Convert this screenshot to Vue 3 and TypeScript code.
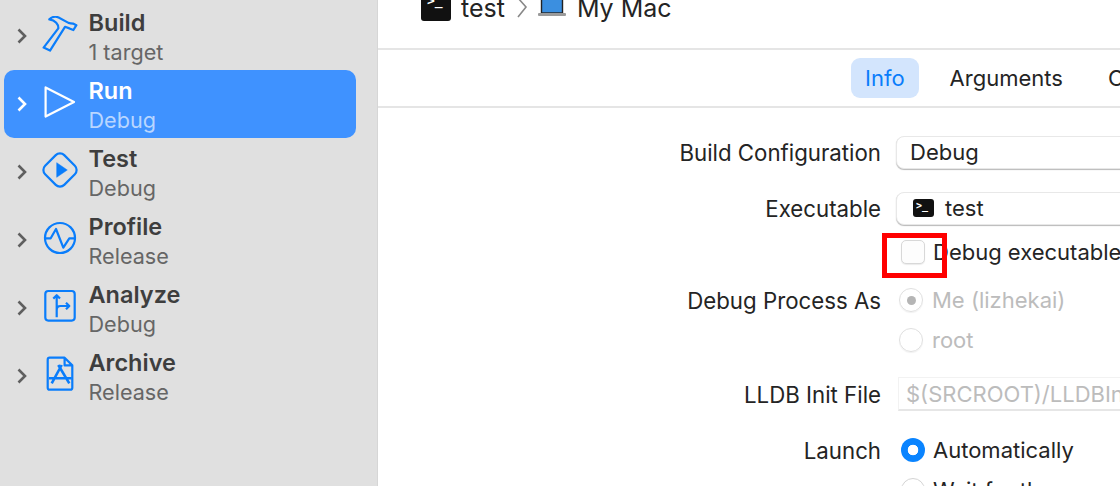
<script setup lang="ts">
interface Scheme {
  name: string
  sub: string
  icon: string
}

const schemes: Scheme[] = [
  { name: 'Build', sub: '1 target', icon: 'build' },
  { name: 'Run', sub: 'Debug', icon: 'run' },
  { name: 'Test', sub: 'Debug', icon: 'test' },
  { name: 'Profile', sub: 'Release', icon: 'profile' },
  { name: 'Analyze', sub: 'Debug', icon: 'analyze' },
  { name: 'Archive', sub: 'Release', icon: 'archive' }
]

const tabs = ['Info', 'Arguments', 'Options']
</script>

<template>
  <div class="window">
    <aside class="sidebar">
      <div
        v-for="s in schemes"
        :key="s.name"
        class="scheme"
        :class="{ selected: s.name === 'Run' }"
      >
        <svg class="chevron" width="14" height="18" viewBox="0 0 14 18">
          <path d="M3.5 2.5 L10 9 L3.5 15.5" />
        </svg>
        <svg class="icon" width="40" height="40" viewBox="0 0 40 40">
          <path v-if="s.icon === 'build'" d="M9.3 3.4 C12 0.9 15.5 0 18.6 1.6 L28.5 6.9 Q30.5 7.4 33 7.6 L36.4 9.2 L33.4 14 L29.4 12.4 L25 10.8 L10 34.6 L3.6 31.6 L18.3 12.4 C18.6 8.4 15.5 4.4 9.3 3.4 Z" />
          <path v-else-if="s.icon === 'run'" d="M5.6 3.4 L34 18 L5.6 32.6 Z" />
          <g v-else-if="s.icon === 'test'">
            <rect x="6.5" y="4.5" width="27" height="27" rx="6" transform="rotate(45 20 18)" />
            <path class="solid" d="M16.7 10.7 L27.3 18 L16.7 25.3 Z" />
          </g>
          <g v-else-if="s.icon === 'profile'">
            <circle cx="20" cy="18" r="15" />
            <path d="M4.5 18.3 H10.7 L16 9 L23.3 27.7 L29.3 18.3 H35.5" />
          </g>
          <g v-else-if="s.icon === 'analyze'">
            <rect x="5.3" y="3" width="29.4" height="29.6" rx="3" />
            <path d="M16.7 7.5 V29.3 M13.3 10.6 L16.7 7.2 L20 10.6 M16.7 22 Q16.7 18 20.5 18 H29 M26 14.7 L29.3 18 L26 21.3" />
          </g>
          <g v-else>
            <path d="M9.7 1.7 H24.6 L32.3 9.4 V31.7 A2 2 0 0 1 30.3 33.7 H9.7 A2 2 0 0 1 7.7 31.7 V3.7 A2 2 0 0 1 9.7 1.7 Z M24.6 1.7 V9.4 H32.3" />
            <path class="thick" d="M21.7 9 L11.7 27.3 M18.3 9 L29.3 27.3 M9 22.3 H31.7" />
          </g>
        </svg>
        <div class="labels">
          <div class="name">{{ s.name }}</div>
          <div class="sub">{{ s.sub }}</div>
        </div>
      </div>
    </aside>

    <main class="pane">
      <header class="crumbs">
        <span class="term large"><i>&gt;_</i></span>
        <span class="crumb-text">test</span>
        <svg class="sep" width="12" height="20" viewBox="0 0 12 20">
          <path d="M2 0 L10 9 L2 19" />
        </svg>
        <svg class="laptop" width="28" height="18" viewBox="0 0 28 18">
          <rect x="3.5" y="-2" width="21" height="16" fill="#3b8fe0" stroke="#222" stroke-width="1.4" />
          <rect x="0" y="14" width="28" height="3" rx="1" fill="#9a9a9a" />
        </svg>
        <span class="crumb-text">My Mac</span>
      </header>

      <nav class="tabs">
        <span v-for="t in tabs" :key="t" class="tab" :class="{ active: t === 'Info' }">{{ t }}</span>
      </nav>

      <section class="form">
        <div class="row">
          <label class="label">Build Configuration</label>
          <div class="dropdown">Debug</div>
        </div>
        <div class="row gap-22">
          <label class="label">Executable</label>
          <div class="dropdown">
            <span class="term"><i>&gt;_</i></span>
            <span>test</span>
          </div>
        </div>
        <div class="row gap-10">
          <span class="label"></span>
          <div class="check-line">
            <span class="checkbox"></span>
            <span>Debug executable</span>
            <span class="callout"></span>
          </div>
        </div>
        <div class="row gap-14">
          <label class="label">Debug Process As</label>
          <div class="radio-line disabled">
            <span class="radio off"><b></b></span>
            <span>Me (lizhekai)</span>
          </div>
        </div>
        <div class="row gap-6">
          <span class="label"></span>
          <div class="radio-line disabled">
            <span class="radio off"></span>
            <span>root</span>
          </div>
        </div>
        <div class="row gap-20">
          <label class="label">LLDB Init File</label>
          <div class="path-input">$(SRCROOT)/LLDBInit</div>
        </div>
        <div class="row gap-22">
          <label class="label">Launch</label>
          <div class="radio-line on-line">
            <span class="radio on"></span>
            <span>Automatically</span>
          </div>
        </div>
        <div class="row gap-6">
          <span class="label"></span>
          <div class="radio-line on-line">
            <span class="radio blank"></span>
            <span>Wait for the executable</span>
          </div>
        </div>
      </section>
    </main>
  </div>
</template>

<style>
html,
body {
  margin: 0;
  overflow: hidden;
  background: #fff;
}
</style>

<style scoped>
.window {
  display: flex;
  width: 1120px;
  height: 486px;
  overflow: hidden;
  font-family: Inter, "Liberation Sans", sans-serif;
  color: #242424;
}

.sidebar {
  flex: 0 0 378px;
  box-sizing: border-box;
  padding: 2px 21px 0 4px;
  background: #e0e0e0;
  border-right: 1px solid #d6d6d6;
}

.scheme {
  display: flex;
  align-items: center;
  height: 68px;
  border-radius: 10px;
}

.scheme.selected {
  background: #3f92ff;
}

.chevron {
  margin-left: 11px;
  flex: none;
}

.chevron path {
  fill: none;
  stroke: #5f5f5f;
  stroke-width: 2.6;
}

.icon {
  margin-left: 11px;
  flex: none;
  fill: none;
  stroke: #0a7dfb;
  stroke-width: 2.2;
  stroke-linejoin: round;
}

.icon .solid {
  fill: #0a7dfb;
  stroke-width: 0.5;
}

.icon .thick {
  stroke-width: 2.6;
}

.labels {
  margin-left: 8.5px;
  padding-top: 2px;
}

.name {
  font-size: 23.5px;
  line-height: 28px;
  font-weight: 600;
  color: #3e3e3e;
}

.sub {
  margin-top: 1px;
  font-size: 21.6px;
  line-height: 28px;
  color: #666;
}

.selected .chevron path {
  stroke: #fff;
}

.selected .icon {
  stroke: #fff;
}

.selected .name {
  color: #fff;
}

.selected .sub {
  color: #b9d6ff;
}

.pane {
  flex: 1;
  min-width: 0;
}

.crumbs {
  display: flex;
  align-items: center;
  box-sizing: border-box;
  height: 50px;
  padding: 0 0 32px 43px;
  border-bottom: 2px solid #e5e5e5;
  font-size: 25px;
}

.crumb-text {
  white-space: nowrap;
}

.sep {
  margin: 0 10px 0 11px;
  flex: none;
}

.sep path {
  fill: none;
  stroke: #888;
  stroke-width: 1.6;
}

.laptop {
  margin-right: 11px;
  flex: none;
}

.term {
  display: inline-flex;
  flex: none;
  box-sizing: border-box;
  width: 21px;
  height: 18px;
  margin-right: 11px;
  padding: 1px 0 0 3px;
  border-radius: 3px;
  background: #111;
  color: #fff;
  font-size: 10px;
  font-weight: 700;
  line-height: 11px;
  font-family: "DejaVu Sans Mono", monospace;
}

.term i {
  font-style: normal;
}

.term.large {
  width: 30px;
  height: 26px;
  margin-right: 10px;
  padding: 0 0 0 6px;
  font-size: 13px;
  line-height: 12px;
}

.tabs {
  display: flex;
  align-items: center;
  box-sizing: border-box;
  height: 58px;
  padding-left: 473px;
  border-bottom: 2px solid #e5e5e5;
  gap: 17px;
  font-size: 22px;
  white-space: nowrap;
}

.tab {
  padding: 0 14px;
  line-height: 40px;
  border-radius: 9px;
}

.tab.active {
  background: #d3e5fd;
  color: #0a7dfb;
}

.form {
  padding-top: 27px;
  font-size: 22px;
}

.row {
  display: flex;
  align-items: center;
  height: 34px;
  gap: 15px;
  white-space: nowrap;
}

.gap-6 { margin-top: 6px; }
.gap-10 { margin-top: 10px; }
.gap-14 { margin-top: 14px; }
.gap-20 { margin-top: 20px; }
.gap-22 { margin-top: 22px; }

.label {
  flex: 0 0 503px;
  font-size: 22.25px;
  text-align: right;
}

.dropdown {
  display: flex;
  align-items: center;
  box-sizing: border-box;
  flex: 1;
  height: 33px;
  margin-right: -20px;
  padding-left: 13px;
  border: 1px solid #e8e8e8;
  border-radius: 8px;
  box-shadow: 0 1px 1px rgba(0, 0, 0, 0.28);
  background: #fff;
}

.dropdown .term {
  margin-left: 3px;
}

.check-line {
  position: relative;
  display: flex;
  align-items: center;
  gap: 8px;
  margin-left: 5px;
}

.checkbox {
  box-sizing: border-box;
  width: 24px;
  height: 24px;
  border: 1px solid #d8d8d8;
  border-radius: 5px;
  background: #fdfdfd;
  box-shadow: 0 1px 1px rgba(0, 0, 0, 0.08);
}

.callout {
  position: absolute;
  left: -19px;
  top: -6px;
  box-sizing: border-box;
  width: 65px;
  height: 45px;
  border: 5px solid #f00;
}

.radio-line {
  display: flex;
  align-items: center;
  gap: 9px;
  margin-left: 3px;
}

.radio-line.disabled {
  color: #bcbcbc;
}

.radio-line.on-line {
  margin-left: 5px;
  gap: 8px;
}

.radio {
  display: flex;
  align-items: center;
  justify-content: center;
  box-sizing: border-box;
  width: 24px;
  height: 24px;
  border-radius: 50%;
}

.radio.off {
  border: 1px solid #e0e0e0;
  box-shadow: 0 1px 1px rgba(0, 0, 0, 0.06);
}

.radio.off b {
  width: 9px;
  height: 9px;
  border-radius: 50%;
  background: #b5b5b5;
}

.radio.on {
  background: radial-gradient(circle, #fff 0 5px, #0a84ff 5.6px);
}

.radio.blank {
  border: 1px solid #d4d4d4;
  box-shadow: 0 1px 1px rgba(0, 0, 0, 0.12);
}

.path-input {
  flex: 1;
  box-sizing: border-box;
  height: 34px;
  margin: 0 -20px 0 2px;
  padding-left: 7px;
  border: 1px solid #f2f2f2;
  border-bottom: 2px solid #e6e6e6;
  color: #bcbcbc;
  line-height: 32px;
}
</style>
